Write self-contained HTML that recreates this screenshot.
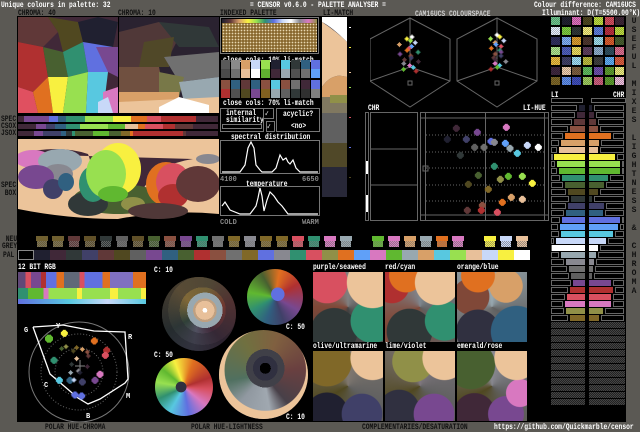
<!DOCTYPE html>
<html><head><meta charset="utf-8"><style>
*{margin:0;padding:0;box-sizing:border-box}
body{width:640px;height:432px;overflow:hidden;background:#5b5954;position:relative;font-family:"Liberation Mono",monospace;font-weight:bold;color:#fff;font-size:9px;line-height:9px}
.a{position:absolute}
.t{position:absolute;white-space:nowrap;font-size:8.5px!important;letter-spacing:0;transform:scaleX(.74);transform-origin:0 0}
.v{position:absolute;font-size:8px;line-height:9px;text-align:center;width:8px;color:#111}
.k{color:#111}
.box{position:absolute;border:1px solid #777}
.chk{background:repeating-conic-gradient(#444 0 25%,#222 0 50%) 0 0/2px 2px}
</style></head><body>
<div class="a" style="left:17px;top:16px;width:609px;height:406px;background:#000"></div>
<div class="t" style="left:1px;top:1px">Unique colours in palette: 32</div>
<div class="t" style="left:250px;top:1px">= CENSOR v0.6.0 - PALETTE ANALYSER =</div>
<div class="t" style="left:534px;top:1px">Colour difference: CAM16UCS</div>
<div class="t k" style="left:18px;top:9px">CHROMA: 40</div>
<div class="t k" style="left:118px;top:9px">CHROMA: 10</div>
<div class="t k" style="left:220px;top:9px">INDEXED PALETTE</div>
<div class="t k" style="left:323px;top:9px">LI-MATCH</div>
<div class="t" style="left:415px;top:10px;color:#ccc">CAM16UCS COLOURSPACE</div>
<div class="t" style="left:542px;top:9px">Illuminant: D(T=5500.00°K)</div>

<svg class="a" style="left:18px;top:17px" width="100" height="96"><rect width="100" height="96" fill="#402838"/>
<polygon points="0,0 30,0 40,15 25,30 0,25" fill="#603838"/><polygon points="30,0 60,5 65,25 45,35 40,15" fill="#504820"/><polygon points="60,5 80,0 100,5 95,30 70,30 65,25" fill="#202030"/>
<polygon points="0,25 25,30 30,60 15,75 0,70" fill="#b03030"/><polygon points="25,30 45,35 50,60 30,60" fill="#486030"/><polygon points="45,35 65,25 70,55 50,60" fill="#309070"/><polygon points="65,25 95,30 90,55 70,55" fill="#6070e0"/><polygon points="78,30 100,30 100,60 90,55" fill="#784890"/>
<polygon points="0,70 15,75 20,96 0,96" fill="#e05060"/><polygon points="15,75 30,60 35,96 20,96" fill="#e07020"/><polygon points="30,60 50,60 45,96 35,96" fill="#f8f040"/><polygon points="50,60 70,55 68,96 45,96" fill="#98e050"/><polygon points="70,55 90,55 85,96 68,96" fill="#58c8e0"/><polygon points="85,75 100,70 100,96 85,96" fill="#d878c0"/><polygon points="80,85 90,80 95,96 80,96" fill="#c8d8f8"/></svg>
<svg class="a" style="left:119px;top:17px" width="100" height="96"><rect width="100" height="96" fill="#2a2230"/>
<polygon points="0,15 40,5 60,20 45,50 0,50" fill="#503838"/><polygon points="40,5 90,10 100,30 60,30" fill="#303838"/><polygon points="25,25 55,20 50,50 20,50" fill="#504828"/><polygon points="45,40 100,35 100,60 60,65" fill="#707070"/><polygon points="0,50 40,50 45,75 0,80" fill="#705040"/><polygon points="40,55 65,60 60,80 40,80" fill="#787848"/><polygon points="60,65 100,60 100,85 65,85" fill="#98a8b0"/><polygon points="0,75 60,75 60,96 0,96" fill="#d8a068"/><polygon points="0,85 100,80 100,96 0,96" fill="#ecc49a"/><polygon points="40,90 60,80 90,88 90,96 40,96" fill="#fff"/></svg>

<div class="t k" style="left:1px;top:116px;line-height:7px">SPEC<br>CSOX<br>JSOX</div>
<div class="a" style="left:18px;top:116px;width:200px;height:6px;background:linear-gradient(90deg,#402838 0 6px,#784890 6px 31px,#6070e0 31px 40px,#306080 40px 48px,#309070 48px 67px,#98e050 67px 95px,#f8f040 95px 113px,#e07020 113px 129px,#d85060 129px 143px,#b03030 143px 178px,#402838 178px)"></div>
<div class="a" style="left:18px;top:124px;width:200px;height:5px;background:linear-gradient(90deg,#402838 0 18px,#784890 18px 28px,#404068 28px 37px,#306080 37px 48px,#309070 48px 62px,#98e050 62px 90px,#60b830 90px 107px,#e8c09a 107px 120px,#e07020 120px 127px,#d85060 127px 145px,#b03030 145px 157px,#603838 157px 175px,#402838 175px)"></div>
<div class="a" style="left:18px;top:131px;width:200px;height:5px;background:linear-gradient(90deg,#402838 0 16px,#784890 16px 25px,#404068 25px 43px,#306080 43px 48px,#303838 48px 54px,#309070 54px 57px,#486030 57px 75px,#60b830 75px 91px,#486030 91px 103px,#806828 103px 112px,#e07020 112px 115px,#b03030 115px 165px,#603838 165px 168px,#402838 168px)"></div>
<div class="t k" style="left:1px;top:181px;line-height:8px">SPEC<br>&nbsp;BOX</div>
<svg class="a" style="left:18px;top:139px" width="201" height="82"><rect width="201" height="82" fill="#000"/><path d="M0,0H201V75Q150,70 100,80 50,80 0,70Z" fill="#ecc49a"/>
<path d="M0,15 Q40,5 70,15 80,40 60,55 110,60 125,50 140,25 175,20 201,15 V82 H0Z" fill="#402838"/>
<ellipse cx="15" cy="20" rx="18" ry="9" fill="#d878c0"/><ellipse cx="42" cy="22" rx="22" ry="12" fill="#98a8b0"/><ellipse cx="40" cy="35" rx="15" ry="10" fill="#888890"/><ellipse cx="18" cy="38" rx="18" ry="12" fill="#784890"/><ellipse cx="35" cy="50" rx="10" ry="10" fill="#404068"/><ellipse cx="48" cy="43" rx="8" ry="9" fill="#306080"/><ellipse cx="100" cy="60" rx="45" ry="15" fill="#486030"/><ellipse cx="70" cy="65" rx="20" ry="12" fill="#303838"/><ellipse cx="75" cy="45" rx="14" ry="18" fill="#309070"/>
<ellipse cx="100" cy="30" rx="23" ry="26" fill="#f8f040"/><ellipse cx="88" cy="35" rx="20" ry="24" fill="#98e050"/><ellipse cx="95" cy="55" rx="15" ry="8" fill="#60b830"/><ellipse cx="115" cy="65" rx="12" ry="7" fill="#909048"/>
<ellipse cx="148" cy="45" rx="20" ry="22" fill="#e07020"/><ellipse cx="155" cy="43" rx="17" ry="19" fill="#d85060"/><ellipse cx="155" cy="57" rx="15" ry="12" fill="#b03030"/><ellipse cx="180" cy="45" rx="22" ry="18" fill="#603838"/><ellipse cx="140" cy="72" rx="30" ry="8" fill="#503838"/><ellipse cx="190" cy="20" rx="12" ry="5" fill="#888890"/></svg>

<div class="box" style="left:220px;top:17px;width:99px;height:37px;background:#000"></div>
<div class="a" style="left:222px;top:19px;width:95px;height:4px;background:linear-gradient(90deg,#202030,#603838,#d8a068,#f8f040,#98e050,#309070,#6070e0,#c8d8f8,#fff,#888890,#d878c0,#909048)"></div>
<div class="a" style="left:222px;top:23px;width:95px;height:29px;background:#8a6a30;background-image:radial-gradient(#e8d8b0 35%,transparent 40%);background-size:3px 3px"></div>
<div class="t" style="left:223px;top:56px">close cols: 10% li-match</div>
<div class="a" id="cc" style="left:221px;top:60px;width:100px;height:40px"></div>
<div class="t" style="left:223px;top:99px">close cols: 70% li-match</div>
<div class="box" style="left:220px;top:108px;width:44px;height:24px"></div>
<div class="t" style="left:226px;top:110px;line-height:7px">internal<br>similarity</div>
<div class="box" style="left:222px;top:124px;width:40px;height:5px"></div>
<div class="box" style="left:263px;top:108px;width:11px;height:11px"></div><div class="t" style="left:265px;top:110px">✓</div>
<div class="box" style="left:266px;top:121px;width:9px;height:11px"></div><div class="t" style="left:267px;top:123px">✓</div>
<div class="box" style="left:276px;top:108px;width:44px;height:24px"></div>
<div class="t" style="left:283px;top:110px">acyclic?</div><div class="t" style="left:291px;top:122px">&lt;no&gt;</div>
<div class="t" style="left:231px;top:133px">spectral distribution</div>
<svg class="a" style="left:220px;top:140px" width="100" height="50"><rect x=".5" y=".5" width="99" height="33" fill="none" stroke="#777"/><polyline points="2,32 20,32 25,25 28,8 31,2 34,8 36,25 40,30 42,32 52,32 56,28 60,15 63,20 66,18 68,22 70,24 73,20 76,28 80,32 98,32" fill="none" stroke="#fff" stroke-width="1.2"/><text x="0" y="41" font-size="7" fill="#888" font-family="Liberation Mono">4100</text><text x="82" y="41" font-size="7" fill="#888" font-family="Liberation Mono">6650</text></svg>
<div class="t" style="left:246px;top:180px">temperature</div>
<svg class="a" style="left:220px;top:186px" width="100" height="40"><rect x=".5" y=".5" width="99" height="29" fill="none" stroke="#777"/><polyline points="2,20 5,16 10,24 20,28 30,28 36,20 38,12 40,2 42,10 44,25 47,14 50,6 54,10 58,16 62,20 65,24 68,28 98,28" fill="none" stroke="#fff" stroke-width="1.2"/><text x="0" y="38" font-size="7" fill="#888" font-family="Liberation Mono">COLD</text><text x="82" y="38" font-size="7" fill="#888" font-family="Liberation Mono">WARM</text></svg>

<svg class="a" style="left:322px;top:17px" width="36" height="182"><rect width="36" height="182" fill="#000"/>
<polygon points="0,0 25,0 25,180 0,180" fill="#303040"/><path d="M0,0H25V25 Q10,10 0,5Z" fill="#fff"/><path d="M0,5Q15,15 25,25V60 Q10,55 0,70Z" fill="#ecc49a"/><path d="M0,70Q10,55 25,60V80 Q10,80 0,80Z" fill="#d8a068"/><rect y="80" width="25" height="25" fill="#807860"/><rect x="8" y="78" width="17" height="8" fill="#909048"/><rect y="96" width="25" height="30" fill="#606060"/><rect y="126" width="25" height="25" fill="#504828"/><rect y="150" width="25" height="30" fill="#282838"/><rect x="27" y="10" width="2" height="1" fill="#fff"/><rect x="27" y="30" width="2" height="1" fill="#f8f040"/><rect x="27" y="55" width="2" height="1" fill="#e8c09a"/><rect x="27" y="70" width="2" height="1" fill="#98e050"/><rect x="27" y="100" width="2" height="1" fill="#d85060"/><rect x="27" y="130" width="2" height="1" fill="#6070e0"/><rect x="27" y="160" width="2" height="1" fill="#504820"/></svg>

<svg class="a" style="left:370px;top:17px" width="180" height="92" id="hex"><g fill="none" stroke="#666"><polygon points="40,1 80,22 80,64 40,90 0,64 0,22"/><polyline points="40,1 40,50 0,64"/><line x1="40" y1="50" x2="80" y2="64"/><rect x="38" y="64" width="4" height="4"/><g transform="translate(87,0)"><polygon points="40,1 80,22 80,64 40,90 0,64 0,22"/><polyline points="40,1 40,50 0,64"/><line x1="40" y1="50" x2="80" y2="64"/><rect x="38" y="64" width="4" height="4"/></g></g></svg>

<div class="a" id="mix" style="left:550px;top:17px;width:75px;height:70px"></div>
<div class="v" style="left:630px;top:17px">U<br>S<br>E<br>F<br>U<br>L<br><br>M<br>I<br>X<br>E<br>S<br><br>L<br>I<br>G<br>H<br>T<br>N<br>E<br>S<br>S<br><br>&amp;<br><br>C<br>H<br>R<br>O<br>M<br>A</div>
<div class="t" style="left:551px;top:91px">LI</div><div class="t" style="left:613px;top:91px">CHR</div>
<div class="a" id="bars" style="left:550px;top:98px;width:76px;height:312px"></div>

<div class="t" style="left:368px;top:104px">CHR</div><div class="t" style="left:523px;top:104px">LI-HUE</div>
<svg class="a" style="left:364px;top:111px" width="186" height="122" id="lh"><g fill="none" stroke="#666"><rect x="1.5" y="1.5" width="3" height="108"/><rect x="6.5" y="1.5" width="47" height="108"/><line x1="6" y1="38" x2="54" y2="38"/><line x1="6" y1="74" x2="54" y2="74"/><rect x="56.5" y="1.5" width="128" height="108"/><line x1="56" y1="7" x2="185" y2="7"/><line x1="56" y1="104" x2="185" y2="104"/><line x1="61.5" y1="1" x2="61.5" y2="110"/><line x1="121.5" y1="1" x2="121.5" y2="110"/><line x1="180.5" y1="1" x2="180.5" y2="110"/><rect x="59" y="55" width="5" height="5"/><g stroke-dasharray="1 2"><line x1="62" y1="24" x2="180" y2="24"/><line x1="62" y1="41" x2="180" y2="41"/><line x1="62" y1="57" x2="180" y2="57"/><line x1="62" y1="74" x2="180" y2="74"/><line x1="62" y1="90" x2="180" y2="90"/></g></g><rect x="2" y="50" width="2" height="13" fill="#fff"/><rect x="2" y="84" width="2" height="17" fill="#fff"/></svg>

<div class="t k" style="left:2px;top:236px;line-height:7px">&nbsp;NEU<br>GREY</div>
<div class="t k" style="left:3px;top:251px">PAL</div>
<div class="a" id="neu" style="left:0;top:236px;width:640px;height:11px"></div>
<div class="a" id="pal" style="left:18px;top:250px;width:520px;height:10px"></div>

<div class="t" style="left:18px;top:263px">12 BIT RGB</div>
<div class="a" style="left:18px;top:272px;width:128px;height:16px;background:linear-gradient(90deg,#604878 0 6%,#d85060 6% 10%,#784890 10% 18%,#b03030 18% 22%,#6070e0 22% 30%,#e07020 30% 36%,#606878 36% 48%,#d85060 48% 52%,#6070e0 52% 66%,#e07020 66% 72%,#8070c0 72% 90%,#e07020 90%)"></div>
<div class="a" style="left:18px;top:288px;width:128px;height:16px;background:linear-gradient(90deg,#309070 0 8%,#60b830 8% 20%,#d878c0 20% 24%,#98e050 24% 46%,#f8f040 46% 50%,#98e050 50% 72%,#f8f040 72% 78%,#98e050 78% 96%,#f8f040 96%)"></div>
<div class="a" style="left:18px;top:299px;width:128px;height:5px;background:linear-gradient(90deg,#6070e0,#58c8e0 40%,#c8d8f8 70%,#58c8e0)"></div>

<svg class="a" style="left:20px;top:318px" width="115" height="104" id="pc"><circle cx="59" cy="54" r="50" fill="none" stroke="#777"/><circle cx="59" cy="54" r="38" fill="none" stroke="#666" stroke-dasharray="1 2"/><circle cx="59" cy="54" r="24" fill="none" stroke="#666" stroke-dasharray="1 2"/><polyline points="13,9 43,7 74,13 105,14 108,61 105,65 80,81 68,86 58,80 30,56 13,9" fill="none" stroke="#fff" stroke-width="1.3"/><line x1="55" y1="48" x2="65" y2="48" stroke="#888"/><line x1="60" y1="42" x2="60" y2="56" stroke="#888"/>
<g font-family="Liberation Mono" font-size="7" font-weight="bold" fill="#fff"><text x="4" y="14">G</text><text x="36" y="10">Y</text><text x="108" y="21">R</text><text x="106" y="80">M</text><text x="66" y="100">B</text><text x="24" y="69">C</text></g></svg>

<div class="t" style="left:154px;top:266px">C: 10</div>
<div class="a" style="left:162px;top:277px;width:74px;height:74px;border-radius:50%;background:radial-gradient(circle at 58% 45%,#fff 0 4%,#e8c09a 4% 16%,#c0a080 16% 20%,#98a8b0 20% 30%,transparent 30%),conic-gradient(from -40deg,#806838,#706038 60deg,#703830 110deg,#402838 180deg,#505060 230deg,#304038 280deg,#806838)"></div>
<div class="a" style="left:162px;top:277px;width:74px;height:74px;border-radius:50%;background:radial-gradient(circle at 55% 45%,transparent 0 40%,rgba(40,40,50,.45) 40% 60%,rgba(30,30,40,.6) 60%)"></div>
<div class="a" style="left:247px;top:269px;width:56px;height:56px;border-radius:50%;background:radial-gradient(circle at 55% 45%,#6070e0 0 15%,transparent 16%),conic-gradient(from -30deg,#486030,#e07020 40deg,#b03030 90deg,#784890 150deg,#404068 190deg,#306080 230deg,#309070 270deg,#60b830 310deg,#486030)"></div>
<div class="a" style="left:247px;top:269px;width:56px;height:56px;border-radius:50%;background:radial-gradient(transparent 0 75%,rgba(30,25,45,.7) 76%)"></div>
<div class="t" style="left:286px;top:323px">C: 50</div>
<div class="t" style="left:154px;top:351px">C: 50</div>
<div class="a" style="left:155px;top:358px;width:58px;height:58px;border-radius:50%;background:radial-gradient(circle at 45% 50%,#303040 0 12%,transparent 13%),conic-gradient(from -20deg,#f8f040,#e07020 40deg,#b03030 90deg,#d85060 115deg,#d878c0 150deg,#6070e0 190deg,#58c8e0 230deg,#309070 265deg,#98e050 300deg,#60b830 330deg,#f8f040)"></div>
<div class="a" style="left:219px;top:330px;width:89px;height:89px;border-radius:50%;background:radial-gradient(circle at 52% 43%,#000 0 8%,#303040 8% 18%,#404048 18% 28%,transparent 28%),conic-gradient(from -30deg,#707040,#806040 50deg,#6a4040 110deg,#484048 170deg,#a0a8b0 200deg,#9098a0 250deg,#507060 290deg,#707040)"></div>
<div class="a" style="left:219px;top:330px;width:89px;height:89px;border-radius:50%;background:radial-gradient(circle at 52% 45%,transparent 0 60%,#ecc49a 61% 88%,#fff 89%)"></div>
<div class="t" style="left:286px;top:413px">C: 10</div>

<div class="t" style="left:313px;top:263px">purple/seaweed</div>
<div class="t" style="left:385px;top:263px">red/cyan</div>
<div class="t" style="left:457px;top:263px">orange/blue</div>
<div class="t" style="left:313px;top:342px">olive/ultramarine</div>
<div class="t" style="left:385px;top:342px">lime/violet</div>
<div class="t" style="left:457px;top:342px">emerald/rose</div>
<div class="a" style="left:313px;top:272px;width:70px;height:70px;background:radial-gradient(circle at 85% 15%,#ecc49a 0 30%,transparent 31%),radial-gradient(circle at 85% 70%,#309070 0 28%,transparent 29%),radial-gradient(circle at 20% 15%,#d85060 0 25%,transparent 26%),radial-gradient(circle at 30% 85%,#303838 0 30%,transparent 31%),conic-gradient(from 0deg at 50% 50%,#808080,#606060 90deg,#404040 180deg,#804838 270deg,#808080)"></div>
<div class="a" style="left:385px;top:272px;width:70px;height:70px;background:radial-gradient(circle at 75% 15%,#ecc49a 0 28%,transparent 29%),radial-gradient(circle at 30% 5%,#e07020 0 20%,transparent 21%),radial-gradient(circle at 10% 20%,#b03030 0 20%,transparent 21%),radial-gradient(circle at 85% 70%,#309070 0 25%,transparent 26%),radial-gradient(circle at 35% 85%,#303838 0 30%,transparent 31%),conic-gradient(#808890,#606060 120deg,#804838 240deg,#808890)"></div>
<div class="a" style="left:457px;top:272px;width:70px;height:70px;background:radial-gradient(circle at 30% 5%,#e07020 0 20%,transparent 21%),radial-gradient(circle at 70% 20%,#d8a068 0 22%,transparent 23%),radial-gradient(circle at 85% 85%,#306080 0 30%,transparent 31%),radial-gradient(circle at 30% 85%,#303040 0 28%,transparent 29%),radial-gradient(circle at 20% 35%,#804838 0 25%,transparent 26%),conic-gradient(#98a8b0,#606060 120deg,#707070 240deg,#98a8b0)"></div>
<div class="a" style="left:313px;top:351px;width:70px;height:70px;background:radial-gradient(circle at 85% 10%,#ecc49a 0 25%,transparent 26%),radial-gradient(circle at 20% 15%,#806828 0 30%,transparent 31%),radial-gradient(circle at 70% 90%,#404068 0 25%,transparent 26%),radial-gradient(circle at 20% 90%,#202030 0 25%,transparent 26%),conic-gradient(#807870,#606060 120deg,#504820 240deg,#807870)"></div>
<div class="a" style="left:385px;top:351px;width:70px;height:70px;background:radial-gradient(circle at 85% 10%,#ecc49a 0 25%,transparent 26%),radial-gradient(circle at 40% 15%,#909048 0 28%,transparent 29%),radial-gradient(circle at 70% 90%,#784890 0 25%,transparent 26%),radial-gradient(circle at 20% 85%,#303040 0 25%,transparent 26%),conic-gradient(#807880,#606060 120deg,#504820 240deg,#807880)"></div>
<div class="a" style="left:457px;top:351px;width:70px;height:70px;background:radial-gradient(circle at 85% 10%,#ecc49a 0 25%,transparent 26%),radial-gradient(circle at 20% 20%,#486030 0 30%,transparent 31%),radial-gradient(circle at 90% 60%,#d878c0 0 18%,transparent 19%),radial-gradient(circle at 70% 90%,#784890 0 22%,transparent 23%),radial-gradient(circle at 25% 90%,#402838 0 25%,transparent 26%),conic-gradient(#888890,#606060 120deg,#504820 240deg,#888890)"></div>

<div class="t k" style="left:45px;top:423px">POLAR HUE-CHROMA</div>
<div class="t k" style="left:191px;top:423px">POLAR HUE-LIGHTNESS</div>
<div class="t k" style="left:362px;top:423px">COMPLEMENTARIES/DESATURATION</div>
<div class="t" style="left:494px;top:423px">https://github.com/Quickmarble/censor</div>

<script>
function d(p,x,y,w,h,c,ex){var e=document.createElement('div');e.className='a'+(ex||'');e.style.cssText='left:'+x+'px;top:'+y+'px;width:'+w+'px;height:'+h+'px;'+(c?'background:'+c:'');p.appendChild(e);return e;}
var cc=document.getElementById('cc');
var r1=[['#5a5a5a','#4a4a4a'],['#8a8a8a','#707070'],['#d8a068','#e8c09a'],['#c8d8f8','#fff'],['#98e050','#60b030'],['#202030','#402838'],['#58c8e0','#98a8b0'],['#303838','#505050'],['#306080','#707070'],['#6070e0','#60a0f8']];
var r2=[['#8a5040','#b03030'],['#306080','#505050'],['#603838','#504820'],['#306080','#784890'],['#8a5040','#806020'],['#58c8e0','#98a8b0'],['#8a5040','#606060'],['#707070','#303838'],['#402838','#303030'],['#6070e0','#808080']];
r1.forEach(function(c,i){d(cc,i*10,0,9,9,c[0]);d(cc,i*10,9,9,9,c[1]);});
r2.forEach(function(c,i){d(cc,i*10,20,9,9,c[0]);d(cc,i*10,29,9,9,c[1]);});
var mixc=['#70c890','#202030','#e070c0','#504820','#c0e040','#d85060','#402838','#e8f0ff','#80d040','#303838','#f8f080','#6080e0','#c03040','#c0e040','#303060','#80b0f8','#e0a030','#503830','#a0e0f0','#e06030','#486030','#b0e890','#5060c0','#f0e060','#604060','#90b0d0','#305060','#e07090','#f0c040','#404068','#a0e0f8','#c0c040','#404040','#60b0f8','#e06040','#402840','#f0d0b0','#806040','#60c060','#7050b0','#60a030','#f0f080','#806828','#6090f0','#4050c0','#a0d060','#d06080','#60a030','#f0c0e0'];
var mix=document.getElementById('mix');
mixc.forEach(function(c,i){var x=(i%7)*10.7,y=Math.floor(i/7)*10;var e=d(mix,x+1,y,9,8,c);e.style.backgroundImage='repeating-conic-gradient(rgba(0,0,0,.25) 0 25%,transparent 0 50%)';e.style.backgroundSize='2px 2px';});
var bars=document.getElementById('bars');
var bc=[['#202030',10,4],['#402838',14,6],['#603838',20,8],['#8a5040',26,10],['#e07020',36,26],['#d8a068',42,12],['#e8c09a',46,10],['#f8f040',54,30],['#98e050',50,36],['#60b830',46,36],['#309070',40,22],['#486030',36,18],['#504820',30,10],['#303838',24,4],['#404068',30,18],['#306080',34,16],['#6070e0',40,36],['#60a0f8',44,34],['#58c8e0',42,28],['#c8d8f8',52,20],['#ffffff',58,10],['#98a8b0',42,8],['#888890',34,6],['#707070',28,5],['#606060',24,3],['#784890',22,26],['#b03030',26,28],['#d85060',32,26],['#d878c0',36,26],['#909048',34,16],['#806828',26,12]];
for(var i=0;i<44;i++){var y=i*7;if(y>306)break;
 if(i==0){d(bars,1,y,32,5,'','').style.border='1px solid #666';d(bars,41,y,35,5,'').style.border='1px solid #666';continue;}
 var b=bc[i-1];
 if(b){var lw=Math.round(b[1]*34/60),cw=Math.round(b[2]*34/40);
  var e1=d(bars,1,y,34-lw-2,6,'');e1.style.border='1px solid #666';
  d(bars,35-lw,y,lw,6,b[0]);d(bars,39,y,cw,6,b[0]);
  var e2=d(bars,39+cw+2,y,35-cw-2,6,'');e2.style.border='1px solid #666';
 } else {d(bars,1,y,34,6,'',' chk');d(bars,39,y,36,6,'',' chk');}
}
var pal=['#000','#202030','#402838','#303838','#404068','#603838','#504820','#606060','#784890','#306080','#486030','#b03030','#8a5040','#707070','#806828','#6070e0','#888890','#309070','#d85060','#909048','#e07020','#60a0f8','#d878c0','#60b830','#98a8b0','#d8a068','#58c8e0','#98e050','#e8c09a','#c8d8f8','#f8f040','#ffffff'];
var pe=document.getElementById('pal');pal.forEach(function(c,i){var e=d(pe,i*16,0,16,10,c);if(i==0)e.style.border='1px solid #888';});
var neu=['#706030','#706030','#603838','#605028','#303838','#606060','#605028','#486030','#8a5040','#784890','#309070','#707070','#806828','#888890','#806828','#806828','#d85060','#309070','#d878c0','#98a8b0',null,'#60b830','#d878c0','#d8a068','#98a8b0','#e07020','#d878c0',null,'#f8f040','#c8d8f8','#e8c09a'];
var ne=document.getElementById('neu');neu.forEach(function(c,i){if(!c)return;var x=36+i*16;d(ne,x,0,12,5,c);var e=d(ne,x+1,5,10,6,c);e.style.backgroundImage='repeating-conic-gradient(rgba(120,120,120,.7) 0 25%,transparent 0 50%)';e.style.backgroundSize='2px 2px';});
function star(svg,x,y,c,r){var n='http://www.w3.org/2000/svg';var g=document.createElementNS(n,'rect');g.setAttribute('x',x-r);g.setAttribute('y',y-r);g.setAttribute('width',2*r);g.setAttribute('height',2*r);g.setAttribute('fill',c);svg.appendChild(g);var h=document.createElementNS(n,'rect');h.setAttribute('x',x-r-1);h.setAttribute('y',y-r+1);h.setAttribute('width',2*r+2);h.setAttribute('height',2*r-2);h.setAttribute('fill',c);svg.appendChild(h);var v=document.createElementNS(n,'rect');v.setAttribute('x',x-r+1);v.setAttribute('y',y-r-1);v.setAttribute('width',2*r-2);v.setAttribute('height',2*r+2);v.setAttribute('fill',c);svg.appendChild(v);}
var lh=document.getElementById('lh');
[[289,70,'#402838'],[352,82,'#784890'],[439,67,'#d878c0'],[262,103,'#202030'],[319,103,'#404068'],[393,109,'#6070e0'],[403,112,'#888890'],[436,115,'#60a0f8'],[344,127,'#606060'],[372,127,'#707070'],[450,130,'#98a8b0'],[502,121,'#c8d8f8'],[535,127,'#fff'],[472,145,'#58c8e0'],[301,151,'#303838'],[403,184,'#309070'],[355,211,'#486030'],[421,223,'#909048'],[445,214,'#60b830'],[487,214,'#98e050'],[517,235,'#f8f040'],[325,238,'#504820'],[385,253,'#806828'],[454,277,'#d8a068'],[487,283,'#e8c09a'],[427,292,'#e07020'],[322,316,'#603838'],[367,301,'#8a5040'],[364,316,'#b03030'],[412,322,'#d85060']].forEach(function(p){star(lh,360+p[0]/3-364,105+p[1]/3-111,p[2],2.5);});
var hx=document.getElementById('hex');
var hc=['#fff','#f8f040','#98e050','#c8d8f8','#d8a068','#60a0f8','#d85060','#e07020','#309070','#784890','#8a5040','#404068','#603838','#402838','#888890','#d878c0','#58c8e0','#60b830','#b03030'];
hc.forEach(function(c,i){var a=i*2.4,rr=1+(i%5)*1.1;var y=20+i*1.9;star(hx,40+Math.cos(a)*rr*2,y,c,1.5);star(hx,127+Math.sin(a)*rr*2,y-2,c,1.5);});
var pc=document.getElementById('pc');
[[147,368,'#60b830'],[193,352,'#f8f040'],[283,375,'#e07020'],[320,403,'#b03030'],[316,418,'#d85060'],[162,433,'#309070'],[300,475,'#d878c0'],[285,493,'#784890'],[178,493,'#58c8e0'],[210,493,'#306080'],[247,498,'#404068'],[225,537,'#6070e0'],[245,540,'#6070e0']].forEach(function(p){star(pc,p[0]/3-20,216+p[1]/3-318,p[2],p[0]==147?3:2.5);});
[[185,398,'#486030'],[198,392,'#909048'],[230,395,'#806828'],[247,400,'#d8a068'],[262,408,'#8a5040'],[265,420,'#603838'],[220,405,'#504820'],[230,428,'#e8c09a'],[215,445,'#303838'],[262,452,'#402838'],[212,470,'#98a8b0'],[222,492,'#c8d8f8'],[235,465,'#888890'],[240,470,'#202030']].forEach(function(p){star(pc,p[0]/3-20,216+p[1]/3-318,p[2],1.5);});
</script>
</body></html>
